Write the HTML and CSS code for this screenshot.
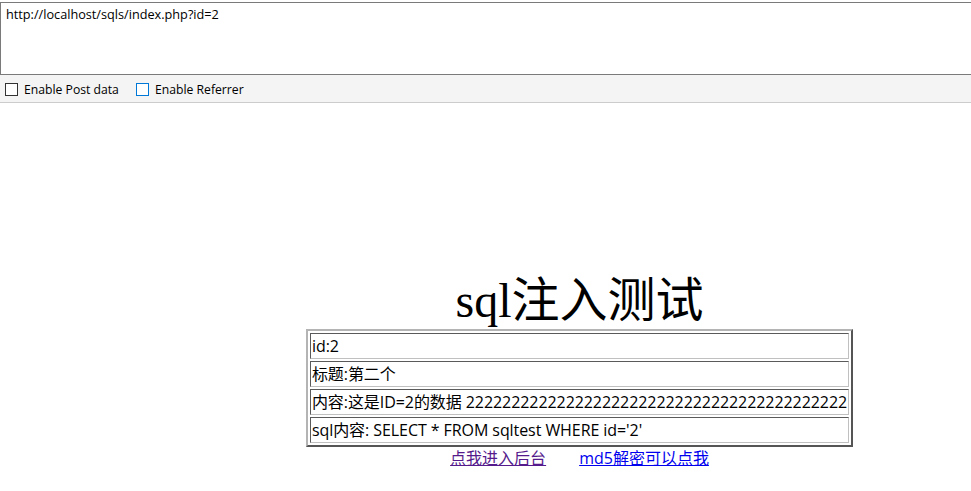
FILE: index.html
```html
<!DOCTYPE html>
<html>
<head>
<meta charset="utf-8">
<title>sql注入测试</title>
<link rel="stylesheet" href="styles.css">
</head>
<body>
<div class="toolbar">
  <div class="url-box">http://localhost/sqls/index.php?id=2</div>
  <div class="options">
    <label class="opt opt-post"><span class="check"></span>Enable Post data</label>
    <label class="opt"><span class="check check-blue"></span>Enable Referrer</label>
  </div>
</div>
<div class="page">
  <h1 class="title">sql注入测试</h1>
  <table class="result">
    <tr><td>id:2</td></tr>
    <tr><td>标题:第二个</td></tr>
    <tr><td>内容:这是ID=2的数据 222222222222222222222222222222222222222222</td></tr>
    <tr><td>sql内容: SELECT * FROM sqltest WHERE id='2'</td></tr>
  </table>
  <div class="links">
    <a class="link visited" href="#admin">点我进入后台</a><a class="link" href="#md5">md5解密可以点我</a>
  </div>
</div>
</body>
</html>
```
FILE: styles.css
```css
html, body {
  margin: 0;
  padding: 0;
  background: #ffffff;
  overflow: hidden;
}
body {
  width: 971px;
  height: 491px;
}
.toolbar {
  padding-top: 2px;
  font-family: "Open Sans", "Noto Sans", sans-serif;
  font-size: 12.2px;
  color: #000;
}
.url-box {
  height: 68px;
  border-top: 1px solid #7a7a7a;
  border-left: 1px solid #7a7a7a;
  border-bottom: 1px solid #7a7a7a;
  padding: 3px 0 0 5px;
  line-height: 17px;
  font-size: 12.7px;
  background: #fff;
  margin-right: -4px;
}
.options {
  box-sizing: border-box;
  height: 28px;
  background: #f4f4f4;
  border-bottom: 1px solid #cccccc;
  display: flex;
  align-items: center;
  padding-left: 5px;
  padding-top: 2px;
  gap: 17px;
}
.opt {
  display: flex;
  align-items: center;
  line-height: 16px;
  flex-shrink: 0;
}
.opt-post {
  width: 114px;
}
.check {
  width: 11px;
  height: 11px;
  flex-shrink: 0;
  border: 1px solid #333333;
  background: #fff;
  margin-right: 6px;
}
.check.check-blue {
  border: 1px solid #0078d7;
}
.page {
  width: 1159px;
  text-align: center;
  padding-top: 170px;
}
.title {
  margin: 0;
  font-family: "Liberation Serif", "Noto Sans CJK SC", serif;
  font-weight: normal;
  font-size: 48px;
  line-height: 56px;
  color: #000;
}
.result {
  margin: 0 auto;
  border: 2px solid;
  border-color: #b4b4b4 #555555 #555555 #b4b4b4;
  border-spacing: 2px;
  text-align: left;
  font-family: "Open Sans", "Noto Sans CJK SC", sans-serif;
  font-size: 16px;
  letter-spacing: -0.07px;
  color: #000;
}
.result td {
  border: 1px solid;
  border-color: #5a5a5a #c0c0c0 #c0c0c0 #5a5a5a;
  padding: 1px;
  line-height: 22px;
  white-space: nowrap;
}
.links {
  font-family: "Open Sans", "Noto Sans CJK SC", sans-serif;
  font-size: 16px;
  line-height: 22px;
}
.link {
  color: #0000ee;
  text-decoration: underline;
}
.link.visited {
  color: #551a8b;
  margin-right: 33px;
}
```
